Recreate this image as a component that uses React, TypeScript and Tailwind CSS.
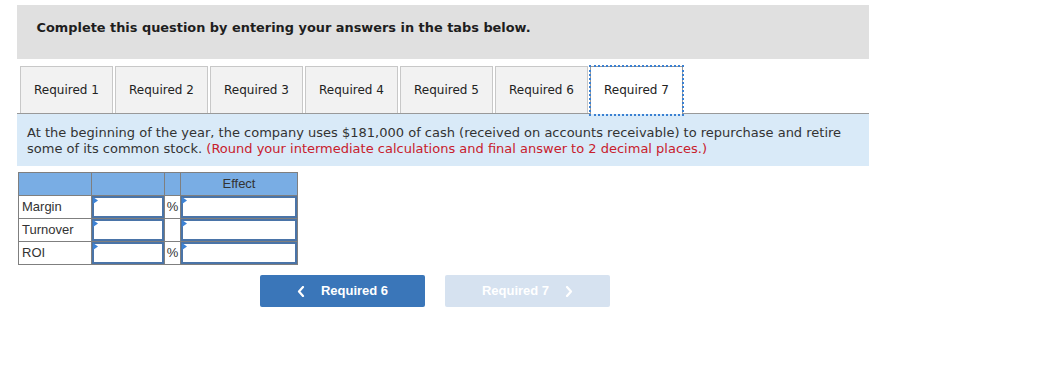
import React from "react";

const tabs = ["Required 1", "Required 2", "Required 3", "Required 4", "Required 5", "Required 6", "Required 7"];

function Tri() {
  return (
    <svg className="absolute left-[1px] top-[1px]" width="5" height="7" viewBox="0 0 5 7">
      <polygon points="0,0 5,3.5 0,7" fill="#3d82d4" />
    </svg>
  );
}

function InputCell() {
  return (
    <div className="relative bg-white">
      <div className="h-full w-full border-2 border-[#4a74a8] bg-white" />
      <Tri />
    </div>
  );
}

function Chevron({ dir }: { dir: "left" | "right" }) {
  return (
    <svg width="8" height="11" viewBox="0 0 8 11" fill="none">
      {dir === "left" ? (
        <polyline points="6,1 2,5.5 6,10" stroke="white" strokeWidth="2.2" strokeLinecap="round" strokeLinejoin="round" />
      ) : (
        <polyline points="2,1 6,5.5 2,10" stroke="white" strokeWidth="2.2" strokeLinecap="round" strokeLinejoin="round" />
      )}
    </svg>
  );
}

export default function App() {
  const labelCls = "bg-white pl-[3px] text-[13px] leading-[22px] text-[#333] font-['Liberation_Sans',Arial,sans-serif]";
  const pctCls = "bg-white text-center text-[13px] leading-[22px] text-[#333] font-['Liberation_Sans',Arial,sans-serif]";
  return (
    <div className="w-[1062px] h-[374px] bg-white pt-[5px] pl-[17px]">
      <div className="w-[852px]">
        <div className="h-[54px] bg-[#e0e0e0] pt-[15px] pl-[19.5px] font-['DejaVu_Sans',Verdana,sans-serif] font-bold text-[12.9px] leading-[16px] text-[#1e1e1e]">
          Complete this question by entering your answers in the tabs below.
        </div>
        <div className="mt-[7px] flex gap-[2px] pl-[3px] border-b border-[#999]">
          {tabs.map((t, i) =>
            i === 6 ? (
              <div
                key={t}
                className="relative -mb-px flex h-[48px] w-[93px] items-center justify-center border border-b-0 border-[#999] bg-white pb-px font-['DejaVu_Sans',Verdana,sans-serif] text-[12px] text-[#222]"
              >
                <span className="pointer-events-none absolute -inset-[2px] border-2 border-dotted border-[#3a80d2]" />
                {t}
              </div>
            ) : (
              <div
                key={t}
                className="flex h-[47px] w-[93px] items-center justify-center border border-b-0 border-[#c8c8c8] bg-[#f2f2f2] font-['DejaVu_Sans',Verdana,sans-serif] text-[12px] text-[#222]"
              >
                {t}
              </div>
            )
          )}
        </div>
        <div className="h-[52px] bg-[#d9eaf8] px-[10px] pt-[11px] font-['DejaVu_Sans',Verdana,sans-serif] text-[13px] leading-[16px] text-[#333]">
          At the beginning of the year, the company uses $181,000 of cash (received on accounts receivable) to repurchase and retire some of its common stock.{" "}
          <span className="text-[#c8202c]">(Round your intermediate calculations and final answer to 2 decimal places.)</span>
        </div>

        <div className="ml-px mt-[6px] grid w-[280px] grid-cols-[72px_72px_15px_116px] grid-rows-[22px_22px_22px_22px] gap-px bg-[#7f7f7f] p-px">
          <div className="bg-[#79ade4]" />
          <div className="bg-[#79ade4]" />
          <div className="bg-[#79ade4]" />
          <div className="bg-[#79ade4] text-center text-[13px] leading-[22px] text-[#333] font-['Liberation_Sans',Arial,sans-serif]">Effect</div>

          <div className={labelCls}>Margin</div>
          <InputCell />
          <div className={pctCls}>%</div>
          <InputCell />

          <div className={labelCls}>Turnover</div>
          <InputCell />
          <div className={pctCls}></div>
          <InputCell />

          <div className={labelCls}>ROI</div>
          <InputCell />
          <div className={pctCls}>%</div>
          <InputCell />
        </div>

        <div className="mt-[10px] flex gap-[20px] pl-[243px]">
          <div className="flex h-[32px] w-[165px] items-center justify-center gap-[16px] rounded-[2px] bg-[#3a76b9] font-['Liberation_Sans',Arial,sans-serif] text-[13px] font-bold text-white">
            <Chevron dir="left" />
            <span>Required 6</span>
          </div>
          <div className="flex h-[32px] w-[165px] items-center justify-center gap-[16px] rounded-[2px] bg-[#d6e2f0] font-['Liberation_Sans',Arial,sans-serif] text-[13px] font-bold text-white">
            <span>Required 7</span>
            <Chevron dir="right" />
          </div>
        </div>
      </div>
    </div>
  );
}
